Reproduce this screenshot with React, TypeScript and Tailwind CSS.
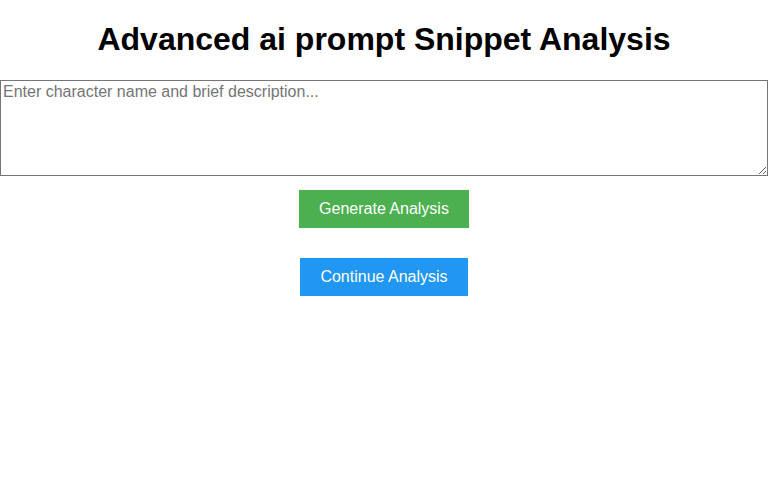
import { useState } from 'react';

export default function App() {
  const [text, setText] = useState('');

  return (
    <div className="min-h-screen bg-white font-['Liberation_Sans',Arial,sans-serif] text-black">
      <h1 className="text-center text-[32px] font-bold leading-[37px] pt-[21px] pb-[22px]">
        Advanced ai prompt Snippet Analysis
      </h1>

      {/* 入力欄 */}
      <textarea
        value={text}
        onChange={(e) => setText(e.target.value)}
        placeholder="Enter character name and brief description..."
        className="block w-full h-[96px] border border-[#767676] px-[2px] py-[2px] text-[16px] leading-[18px] placeholder:text-[#757575] resize-y outline-none"
      />

      <div className="flex flex-col items-center">
        <button className="mt-[14px] w-[170px] h-[38px] bg-[#4CAF50] text-white text-[16px]">
          Generate Analysis
        </button>
        <button className="mt-[30px] w-[168px] h-[38px] bg-[#2196F3] text-white text-[16px]">
          Continue Analysis
        </button>
      </div>
    </div>
  );
}
